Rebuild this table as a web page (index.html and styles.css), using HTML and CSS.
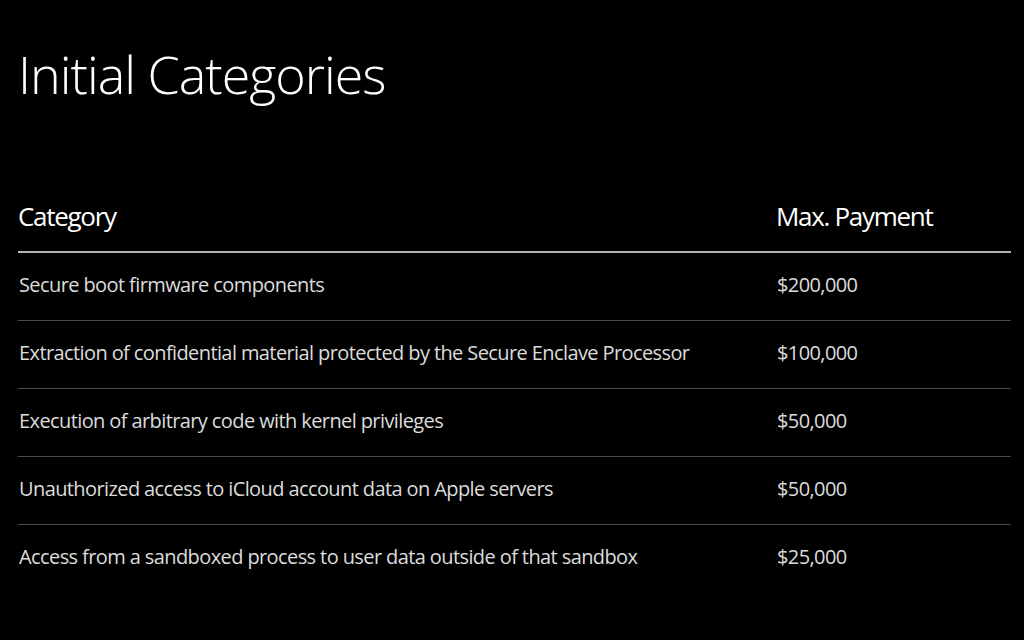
FILE: index.html
```html
<!DOCTYPE html>
<html lang="en">
<head>
    <meta charset="UTF-8">
    <meta name="viewport" content="width=device-width, initial-scale=1.0">
    <title>Initial Categories</title>
    <link rel="stylesheet" href="styles.css">
</head>
<body>
    <div class="slide">
        <h1 class="title">Initial Categories</h1>
        <table class="bounty">
            <thead>
                <tr>
                    <th class="col-category">Category</th>
                    <th class="col-payment">Max. Payment</th>
                </tr>
            </thead>
            <tbody>
                <tr>
                    <td>Secure boot firmware components</td>
                    <td>$200,000</td>
                </tr>
                <tr>
                    <td>Extraction of confidential material protected by the Secure Enclave Processor</td>
                    <td>$100,000</td>
                </tr>
                <tr>
                    <td>Execution of arbitrary code with kernel privileges</td>
                    <td>$50,000</td>
                </tr>
                <tr>
                    <td>Unauthorized access to iCloud account data on Apple servers</td>
                    <td>$50,000</td>
                </tr>
                <tr>
                    <td>Access from a sandboxed process to user data outside of that sandbox</td>
                    <td>$25,000</td>
                </tr>
            </tbody>
        </table>
    </div>
</body>
</html>
```

FILE: styles.css
```css
body {
    margin: 0;
    background: #000;
    font-family: 'Open Sans', 'Noto Sans', sans-serif;
    color: #fff;
}
.slide {
    width: 1024px;
    height: 640px;
    padding: 0 13px 0 18px;
    box-sizing: border-box;
}
.title {
    margin: 0;
    padding-top: 42px;
    font-size: 52px;
    font-weight: 300;
    line-height: 64px;
    letter-spacing: -1px;
}
.bounty {
    width: 100%;
    margin-top: 94px;
    border-collapse: collapse;
}
.bounty th {
    text-align: left;
    font-weight: 400;
    font-size: 26px;
    letter-spacing: -1.3px;
    padding: 0 0 19px 0;
    border-bottom: 2px solid #b4b4b4;
    line-height: 32px;
}
.col-payment {
    width: 235px;
}
.bounty td {
    height: 68px;
    padding: 0 0 3px 1px;
    font-size: 20px;
    letter-spacing: -0.6px;
    color: #dcdcdc;
    border-bottom: 1px solid #4a4a4a;
    box-sizing: border-box;
}
.bounty tbody tr:last-child td {
    border-bottom: none;
}
```
